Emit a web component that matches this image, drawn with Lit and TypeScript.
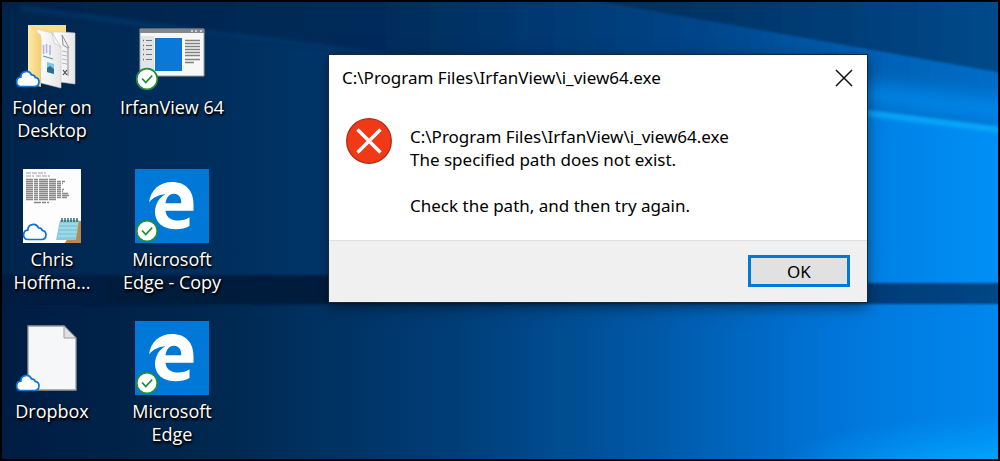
import { LitElement, html, svg, css } from "lit";
import { customElement, property } from "lit/decorators.js";

const cloud = svg`<path d="M5.500 17.500h14a4.600 4.600 0 0 0 .8-9.100 3.800 3.800 0 0 0-3.800-2.600 5.600 5.600 0 0 0-10.700 2.400A4.700 4.700 0 0 0 5.500 17.500z" fill="#fff" stroke="#0a74d6" stroke-width="1.700"/>`;

const check = svg`
  <circle cx="12" cy="62" r="10.300" fill="#fff" stroke="#1f8f3a" stroke-width="1.700"/>
  <path d="M7 61.500l3.800 4L17.200 58.500" fill="none" stroke="#1f8f3a" stroke-width="1.800"/>`;

const folderArt = svg`
  <defs>
    <linearGradient id="fold" x1="0" x2="1"><stop offset="0" stop-color="#ffeaab"/><stop offset="1" stop-color="#f0cc70"/></linearGradient>
    <linearGradient id="page" x1="0" x2="1"><stop offset="0" stop-color="#fff"/><stop offset="1" stop-color="#e6e6e6"/></linearGradient>
  </defs>
  <g transform="translate(0 4)">
    <path d="M13 4h38v50H22z" fill="#f7dd8f"/>
    <path d="M38 11h10l12 1v51l-15-2z" fill="url(#page)" stroke="#c9c9c9" stroke-width=".6"/>
    <path d="M47 14l1 10 5 3v28M47 14l7 13" fill="none" stroke="#777" stroke-width=".8"/>
    <path d="M47 30l5 1M47 34l5 1M47 38l5 1M47 42l5 1" stroke="#aaa" stroke-width=".8"/>
    <path d="M48 49l4 5M52 49l-4 5" stroke="#444" stroke-width="1.200"/>
    <path d="M22 8l15 4 9 14v41L26 62z" fill="url(#page)" stroke="#c9c9c9" stroke-width=".6"/>
    <path d="M37 12l2 10 7 4z" fill="#f4f4f4" stroke="#bbb" stroke-width=".5"/>
    <path d="M28.500 24v9M31.500 23v9M35 24v10" stroke="#b9aee6" stroke-width="1.600"/>
    <path d="M28 35l10 3" stroke="#46a5a5" stroke-width="1.200"/>
    <path d="M32 41l7 2v10l-7-2z" fill="#7cc4ea"/><path d="M32 47l3-2 4 3v5l-7-2z" fill="#276f96"/>
    <path d="M13 4l12 9c3 3 1 20 1 53l-13-4z" fill="url(#fold)"/>
  </g>
  <g transform="translate(0 52)">${cloud}</g>`;

const appArt = svg`
  <g transform="translate(0 3)">
    <path d="M5 9h64v47H5z" fill="#f7f7f7" stroke="#a0a0a0"/>
    <path d="M5 9h64v4H5z" fill="#85878a"/>
    <path d="M56 11h2M60 11h2M65 11h2" stroke="#e8e8e8" stroke-width="1.500"/>
    <path d="M6 16h13v39H6z" fill="#e3e4e6"/>
    <path d="M8 20.500h1M8 25.500h1M8 29.500h1M8 34.500h1M8 39.500h1" stroke="#666" stroke-width="1.300"/>
    <path d="M11 20.500h6M11 25.500h6M11 29.500h6M11 34.500h6M11 39.500h6" stroke="#777" stroke-width="1.200"/>
    <path d="M20 18h27v33H20z" fill="#0a78d7"/>
    <path d="M50 20.500h15M50 23.500h15M50 26.500h15M50 29.500h15M50 32.500h15M50 35.500h15M50 39.500h15M50 42.500h9" stroke="#808080" stroke-width="1.300"/>
  </g>
  ${check}`;

const textArt = svg`
  <path d="M8 0h58v74H8z" fill="#fdfdfd"/>
  <path d="M11 4h20M11 7h8M21 7h14" stroke="#999" stroke-width="1" stroke-dasharray="5 1"/>
  <path d="M11 10.500h31M11 12.500h39M11 14.500h37M11 16.500h36M11 18.500h36M11 20.500h38M11 22.500h37M11 24.500h42M11 26.500h43M11 28.500h41M11 30.500h30M19 33.500h15" stroke="#8a8a8a" stroke-width="1.400" stroke-dasharray="7 1 4 1 9 1"/>
  <path d="M62 52h4v22H50z" fill="#b98a4c"/>
  <path d="M45 51h19l-3 20H41z" fill="#86cbdc"/>
  <path d="M45 55h18M44 59h18M44 63h18M43 67h18" stroke="#b7e4ee" stroke-width="1"/>
  <path d="M47 49v4M50 49v4M53 49v4M56 49v4M59 49v4M62 49v4" stroke="#3c4a50" stroke-width="1.300"/>
  <g transform="translate(7 53)">${cloud}</g>`;

const edgeArt = svg`
  <path d="M0 0h74v74H0z" fill="#0078d7"/>
  <path d="M14 33.500C15.500 21 24.500 13 37 13c14 0 21.500 9 21.500 22v6.700H30.500c.6 7 6.300 9.800 12.500 9.800 4.500 0 8-1.200 11.500-3.300v8.800c-4 2.300-8.500 3.300-13.500 3.300C27.500 60.300 20 53 20 43c0-8 4.500-14.500 10.500-18C24 25.800 17.500 28.500 14 33.500zM30.500 34.300h15.800c0-6.300-2.800-9.600-7.600-9.600-4.400 0-7.500 3.800-8.200 9.600z" fill="#fff"/>
  ${check}`;

const fileArt = svg`
  <path d="M13 5h36l12 12v52H13z" fill="#f6f7f9" stroke="#9a9a9a" stroke-width="1.300"/>
  <path d="M49 5v12h12z" fill="#dfe0e2" stroke="#9a9a9a"/>
  <g transform="translate(0 52)">${cloud}</g>`;

const shortcuts = [
  { art: folderArt, name: "Folder on Desktop" },
  { art: appArt, name: "IrfanView 64" },
  { art: textArt, name: "Chris Hoffma..." },
  { art: edgeArt, name: "Microsoft Edge - Copy" },
  { art: fileArt, name: "Dropbox" },
  { art: edgeArt, name: "Microsoft Edge" },
];

@customElement("desktop-icon")
export class DesktopIcon extends LitElement {
  @property({ attribute: false }) art: unknown;
  @property() name = "";

  static styles = css`
    :host { display: block; min-width: 0; }
    .item {
      width: 100%; padding: 0; border: 0; background: none; color: #fff;
      display: flex; flex-direction: column; align-items: center; gap: 5px;
      font: 18px/23px "Open Sans", "Noto Sans", sans-serif;
      text-shadow: 1px 2px 2px #000, 0 1px 3px #000;
    }
    .art { width: 74px; height: 74px; display: block; }
    .name { max-width: 112px; }
  `;

  render() {
    return html`<button class="item">
      <svg class="art" viewBox="0 0 74 74" aria-hidden="true">${this.art}</svg>
      <span class="name">${this.name}</span>
    </button>`;
  }
}

@customElement("error-dialog")
export class ErrorDialog extends LitElement {
  static styles = css`
    :host { display: block; }
    .dialog {
      background: #fff; color: #000; outline: 1px solid #17273a;
      box-shadow: 0 4px 14px rgba(0, 0, 0, .5);
      font: 17px/23px "Noto Sans", "Open Sans", sans-serif;
    }
    .bar { display: flex; align-items: center; justify-content: space-between; height: 45px; padding: 0 14px 0 13px; }
    .title { font: inherit; margin: 0; }
    .close { border: 0; padding: 0; background: none; width: 18px; height: 18px; display: block; }
    .close svg { display: block; }
    .body { display: flex; gap: 18px; padding: 18px 17px 23px; }
    .mark { flex: none; width: 46px; height: 46px; }
    .text { padding-top: 7px; }
    .text p { margin: 0; }
    .text p + p { margin-top: 23px; }
    .foot { display: flex; justify-content: flex-end; padding: 14px 17px 15px; background: #f0f0f0; border-top: 1px solid #dfdfdf; }
    .ok { width: 102px; height: 32px; padding: 0; border: 3px solid #0078d7; background: #e1e1e1; color: #000; font: inherit; }
  `;

  render() {
    return html`<section class="dialog" role="alertdialog" aria-labelledby="title" aria-describedby="text">
      <header class="bar">
        <h1 class="title" id="title">C:\\Program Files\\IrfanView\\i_view64.exe</h1>
        <button class="close" aria-label="Close">
          <svg width="18" height="18" viewBox="0 0 18 18"><path d="M1 1l16 16M17 1L1 17" stroke="#111" stroke-width="1.500"/></svg>
        </button>
      </header>
      <div class="body">
        <svg class="mark" viewBox="0 0 46 46" aria-hidden="true">
          <circle cx="23" cy="23" r="22.300" fill="#f03a17" stroke="#b32a17" stroke-width="1.300"/>
          <path d="M11.500 11.500l23 23M34.500 11.500l-23 23" stroke="#fff" stroke-width="3.400"/>
        </svg>
        <div class="text" id="text">
          <p>C:\\Program Files\\IrfanView\\i_view64.exe<br>The specified path does not exist.</p>
          <p>Check the path, and then try again.</p>
        </div>
      </div>
      <footer class="foot"><button class="ok">OK</button></footer>
    </section>`;
  }
}

@customElement("app-root")
export class AppRoot extends LitElement {
  static styles = css`
    :host { display: block; }
    .desktop { position: relative; min-height: 100vh; box-sizing: border-box; border: 2px solid #000; overflow: hidden; background: #002a58; }
    .wallpaper { position: absolute; inset: 0; width: 100%; height: 100%; }
    .icons { position: relative; width: 240px; padding-top: 15px; display: grid; grid-template-columns: 100px 140px; row-gap: 27px; }
    .window { position: absolute; left: 327px; top: 53px; width: 538px; }
  `;

  render() {
    return html`<main class="desktop">
      <svg class="wallpaper" viewBox="2 2 996 457" preserveAspectRatio="none" aria-hidden="true">
        <defs>
          <linearGradient id="base">
            <stop offset="0" stop-color="#00244c"/><stop offset=".25" stop-color="#003060"/>
            <stop offset=".5" stop-color="#004585"/><stop offset=".7" stop-color="#0059a8"/>
            <stop offset=".87" stop-color="#0080e4"/><stop offset="1" stop-color="#0090f6"/>
          </linearGradient>
          <linearGradient id="low">
            <stop offset="0" stop-color="#001c42"/><stop offset=".22" stop-color="#002850"/>
            <stop offset=".45" stop-color="#003d76"/><stop offset=".65" stop-color="#0058a6"/>
            <stop offset=".83" stop-color="#0074d8"/><stop offset="1" stop-color="#0088ee"/>
          </linearGradient>
          <linearGradient id="top">
            <stop offset="0" stop-color="#002248"/><stop offset=".4" stop-color="#002d5c"/>
            <stop offset=".7" stop-color="#00468a"/><stop offset=".87" stop-color="#0062b6"/>
            <stop offset="1" stop-color="#0070cc"/>
          </linearGradient>
          <linearGradient id="corner">
            <stop offset="0" stop-color="#002c58"/><stop offset=".6" stop-color="#003e78"/><stop offset="1" stop-color="#004c8e"/>
          </linearGradient>
          <linearGradient id="band">
            <stop offset="0" stop-color="#001c40"/><stop offset=".35" stop-color="#001a3c"/>
            <stop offset=".85" stop-color="#003c78"/><stop offset="1" stop-color="#004888"/>
          </linearGradient>
          <radialGradient id="glow"><stop offset="0" stop-color="#00b0ff"/><stop offset="1" stop-color="#00a0ff" stop-opacity="0"/></radialGradient>
          <filter id="edge" x="-10%" y="-20%" width="120%" height="140%"><feGaussianBlur stdDeviation="1"/></filter>
          <filter id="soft" x="-10%" y="-20%" width="120%" height="140%"><feGaussianBlur stdDeviation="2"/></filter>
          <filter id="haze" x="-20%" y="-60%" width="140%" height="220%"><feGaussianBlur stdDeviation="9"/></filter>
        </defs>
        <path d="M0 0h1000v461H0z" fill="url(#base)"/>
        <path d="M-20-20h1040v150L868 110 330 52-20 6z" fill="url(#top)" filter="url(#edge)"/>
        <path d="M860 82l160 20v24l-160-20z" fill="#0090f6" opacity=".75" filter="url(#haze)"/>
        <path d="M575-3l450-10v90z" fill="url(#corner)" filter="url(#edge)"/>
        <path d="M20 8l370 48" stroke="#07559a" stroke-width="4" opacity=".4" filter="url(#soft)"/>
        <path d="M850 108l160 20v6l-160-20z" fill="#10b4ff" opacity=".7" filter="url(#soft)"/>
        <path d="M0 300h1000v161H0z" fill="url(#low)"/>
        <path d="M-10 275h340l540 8h150v21H330l-340 2z" fill="url(#band)" filter="url(#edge)"/>
        <ellipse cx="990" cy="475" rx="220" ry="60" fill="url(#glow)"/>
      </svg>
      <nav class="icons" aria-label="Desktop">
        ${shortcuts.map((s) => html`<desktop-icon .art=${s.art} .name=${s.name}></desktop-icon>`)}
      </nav>
      <error-dialog class="window"></error-dialog>
    </main>`;
  }
}
